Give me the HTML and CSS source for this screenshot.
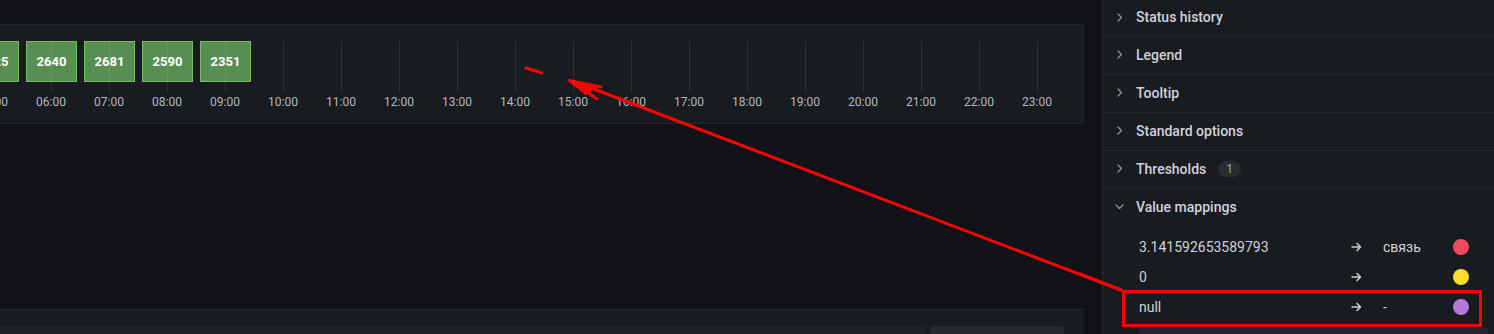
FILE: index.html
```html
<!DOCTYPE html>
<html lang="en">
<head>
<meta charset="utf-8">
<title>Status history</title>
<link rel="stylesheet" href="styles.css">
</head>
<body>
<div class="layout">
  <div class="main">
    <div class="chart-panel">
      <div class="track">
        <div class="slot"><div class="cell">2525</div><div class="label">05:00</div></div>
        <div class="slot"><div class="cell">2640</div><div class="label">06:00</div></div>
        <div class="slot"><div class="cell">2681</div><div class="label">07:00</div></div>
        <div class="slot"><div class="cell">2590</div><div class="label">08:00</div></div>
        <div class="slot"><div class="cell">2351</div><div class="label">09:00</div></div>
        <div class="slot"><div class="cell empty"></div><div class="label">10:00</div></div>
        <div class="slot"><div class="cell empty"></div><div class="label">11:00</div></div>
        <div class="slot"><div class="cell empty"></div><div class="label">12:00</div></div>
        <div class="slot"><div class="cell empty"></div><div class="label">13:00</div></div>
        <div class="slot"><div class="cell empty"></div><div class="label">14:00</div></div>
        <div class="slot"><div class="cell empty"></div><div class="label">15:00</div></div>
        <div class="slot"><div class="cell empty"></div><div class="label">16:00</div></div>
        <div class="slot"><div class="cell empty"></div><div class="label">17:00</div></div>
        <div class="slot"><div class="cell empty"></div><div class="label">18:00</div></div>
        <div class="slot"><div class="cell empty"></div><div class="label">19:00</div></div>
        <div class="slot"><div class="cell empty"></div><div class="label">20:00</div></div>
        <div class="slot"><div class="cell empty"></div><div class="label">21:00</div></div>
        <div class="slot"><div class="cell empty"></div><div class="label">22:00</div></div>
        <div class="slot"><div class="cell empty"></div><div class="label">23:00</div></div>
      </div>
    </div>
    <div class="lower-panel">
      <div class="lower-bar wide"></div>
      <div class="lower-bar narrow"></div>
    </div>
  </div>

  <aside class="side">
    <div class="opt-row first">
      <svg class="chev" width="6" height="9" viewBox="0 0 6 9"><polyline points="1,1 4.5,4.5 1,8" /></svg>
      <span class="opt-title">Status history</span>
    </div>
    <div class="opt-row">
      <svg class="chev" width="6" height="9" viewBox="0 0 6 9"><polyline points="1,1 4.5,4.5 1,8" /></svg>
      <span class="opt-title">Legend</span>
    </div>
    <div class="opt-row">
      <svg class="chev" width="6" height="9" viewBox="0 0 6 9"><polyline points="1,1 4.5,4.5 1,8" /></svg>
      <span class="opt-title">Tooltip</span>
    </div>
    <div class="opt-row">
      <svg class="chev" width="6" height="9" viewBox="0 0 6 9"><polyline points="1,1 4.5,4.5 1,8" /></svg>
      <span class="opt-title">Standard options</span>
    </div>
    <div class="opt-row">
      <svg class="chev" width="6" height="9" viewBox="0 0 6 9"><polyline points="1,1 4.5,4.5 1,8" /></svg>
      <span class="opt-title">Thresholds</span>
      <span class="badge">1</span>
    </div>
    <div class="opt-row open">
      <svg class="chev down" width="9" height="6" viewBox="0 0 9 6"><polyline points="1,1 4.5,4.5 8,1" /></svg>
      <span class="opt-title">Value mappings</span>
    </div>
    <div class="mappings">
      <div class="map-row">
        <span class="map-value">3.141592653589793</span>
        <svg class="map-arrow" width="11" height="10" viewBox="0 0 11 10"><path d="M1 5 H9.5 M6 1.5 L9.5 5 L6 8.5" /></svg>
        <span class="map-text">связь</span>
        <span class="dot red"></span>
      </div>
      <div class="map-row">
        <span class="map-value">0</span>
        <svg class="map-arrow" width="11" height="10" viewBox="0 0 11 10"><path d="M1 5 H9.5 M6 1.5 L9.5 5 L6 8.5" /></svg>
        <span class="map-text"></span>
        <span class="dot yellow"></span>
      </div>
      <div class="map-row">
        <span class="map-value">null</span>
        <svg class="map-arrow" width="11" height="10" viewBox="0 0 11 10"><path d="M1 5 H9.5 M6 1.5 L9.5 5 L6 8.5" /></svg>
        <span class="map-text">-</span>
        <span class="dot purple"></span>
      </div>
      <div class="edit-btn"></div>
    </div>
  </aside>
</div>

<svg class="annotation" width="1494" height="334" viewBox="0 0 1494 334">
  <rect x="1123.5" y="291.5" width="357" height="34" />
  <line x1="1121" y1="290" x2="578" y2="83" />
  <line x1="1121" y1="290" x2="1080" y2="274" />
  <line x1="571" y1="81" x2="601" y2="87" />
  <line x1="571" y1="81" x2="597" y2="99" />
  <polygon class="fill" points="568,80 596,86 586,94" />
  <line x1="526" y1="68" x2="542" y2="73" />
</svg>
</body>
</html>
```

FILE: styles.css
```css
* { box-sizing: border-box; }

html, body {
  margin: 0;
  padding: 0;
  width: 1494px;
  height: 334px;
  overflow: hidden;
  background: #111217;
  font-family: Roboto, "Liberation Sans", Arial, sans-serif;
  color: #ccccdc;
}

.layout {
  display: grid;
  grid-template-columns: 1084px 392px;
  column-gap: 18px;
  height: 334px;
}

.main {
  display: flex;
  flex-direction: column;
  padding-top: 24px;
  overflow: hidden;
}

.chart-panel {
  height: 100px;
  background: #181b1f;
  border: 1px solid #26282e;
  border-left: none;
  border-radius: 0 3px 3px 0;
  overflow: hidden;
  flex: none;
}

.track {
  display: flex;
  margin-left: -36px;
  padding-top: 16px;
}

.slot {
  position: relative;
  width: 58px;
  flex: none;
  display: flex;
  flex-direction: column;
  align-items: center;
}

.slot::before {
  content: "";
  position: absolute;
  left: 29px;
  top: 0;
  width: 1px;
  height: 51px;
  background: rgba(204, 204, 220, 0.12);
  z-index: 2;
}

.cell {
  width: 51px;
  height: 41px;
  margin-left: 1px;
  background: #578f52;
  border: 1px solid #73bf69;
  color: #ffffff;
  font-weight: 700;
  font-size: 13px;
  display: flex;
  align-items: center;
  justify-content: center;
}

.cell.empty {
  background: transparent;
  border-color: transparent;
}

.label {
  margin-top: 13px;
  font-size: 12px;
  line-height: 14px;
  color: #b5b7c2;
  white-space: nowrap;
}

.lower-panel {
  margin-top: 185px;
  flex: 1;
  width: 1085px;
  background: #181b1f;
  border-top: 1px solid #26282e;
  border-right: 1px solid #26282e;
  padding-top: 16px;
  display: flex;
  gap: 4px;
}

.lower-bar {
  height: 20px;
  background: #202228;
  border-radius: 2px 2px 0 0;
}

.lower-bar.wide { width: 926px; }
.lower-bar.narrow { width: 134px; background: #26282e; }

.side {
  background: #181b1f;
  border-left: 1px solid #26282e;
  display: flex;
  flex-direction: column;
}

.opt-row {
  height: 38px;
  flex: none;
  border-bottom: 1px solid #26282e;
  display: flex;
  align-items: center;
  padding-left: 14px;
  padding-bottom: 2px;
}

.opt-row.first { height: 37px; }
.opt-row.open { border-bottom: none; height: 37px; }

.chev {
  flex: none;
  fill: none;
  stroke: #8e8f98;
  stroke-width: 1.4;
  stroke-linecap: round;
  stroke-linejoin: round;
  margin-right: 13px;
}

.chev.down { margin-left: -2px; margin-right: 12px; }

.opt-title {
  font-size: 14px;
  font-weight: 500;
  color: #d0d1dc;
}

.badge {
  margin-left: 12px;
  width: 23px;
  height: 16px;
  border-radius: 8px;
  background: #2a2c31;
  color: #9fa1aa;
  font-size: 12px;
  display: flex;
  align-items: center;
  justify-content: center;
}

.mappings {
  padding: 6px 0 0 36px;
}

.map-row {
  display: grid;
  grid-template-columns: 212px 32px 70px 16px;
  align-items: center;
  height: 30px;
}

.map-value, .map-text {
  font-size: 14px;
  color: #d0d1dc;
}

.map-arrow {
  fill: none;
  stroke: #c9cad4;
  stroke-width: 1.6;
  stroke-linecap: round;
  stroke-linejoin: round;
}

.dot {
  width: 16px;
  height: 16px;
  border-radius: 50%;
}

.dot.red { background: #f2495c; }
.dot.yellow { background: #fade2a; }
.dot.purple { background: #b877d9; }

.edit-btn {
  margin-top: 6px;
  width: 349px;
  height: 20px;
  background: #22252b;
  border-radius: 2px;
}

.annotation {
  position: absolute;
  left: 0;
  top: 0;
  pointer-events: none;
}

.annotation rect,
.annotation line {
  fill: none;
  stroke: #ff0000;
  stroke-width: 3;
}

.annotation line { stroke-linecap: round; }

.annotation .fill {
  fill: #ff0000;
  stroke: #ff0000;
  stroke-width: 2;
  stroke-linejoin: round;
}
```
